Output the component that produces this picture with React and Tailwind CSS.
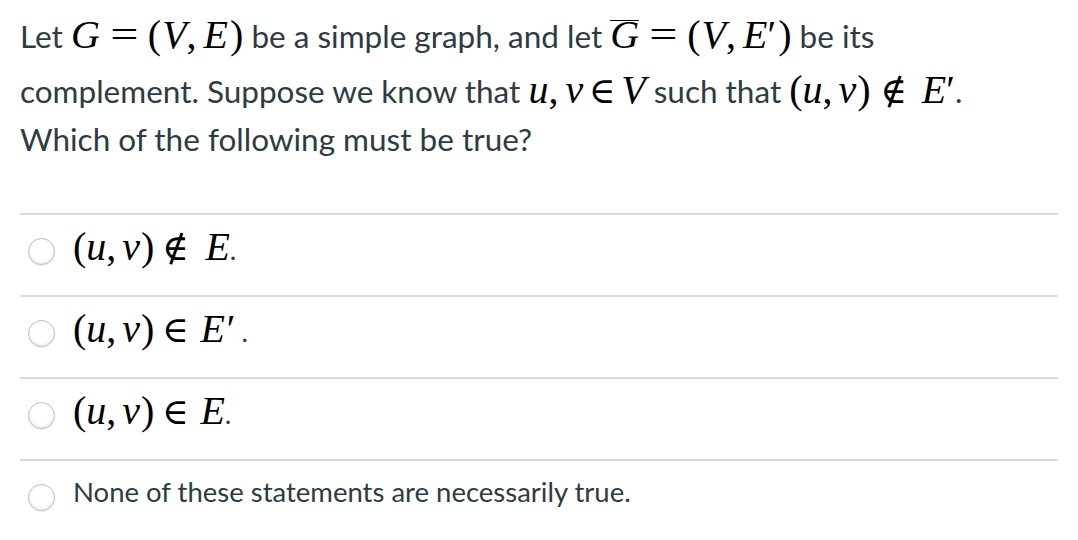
import React from "react";

const M = ({ children, className = "" }) => (
  <span className={"font-['Liberation_Serif','DejaVu_Serif',serif] text-[40px] leading-[28px] text-black " + className}>
    {children}
  </span>
);

const I = ({ children, className = "" }) => <span className={"italic " + className}>{children}</span>;

const Rel = ({ children, className = "" }) => (
  <span className={"inline-flex justify-center text-[36px] " + className}>{children}</span>
);

const Radio = () => (
  <div className="mt-[23px] ml-[8px] w-[27px] h-[27px] shrink-0 rounded-full border border-[#bdbdbd] bg-white shadow-[inset_0_-2px_3px_rgba(0,0,0,0.07),0_1px_1px_rgba(0,0,0,0.08)]" />
);

const Sep = () => <div className="h-[2px] bg-[#dcdcdc]" />;

const Row = ({ children, math }) => (
  <div className="flex h-[80px] items-start">
    <Radio />
    <div className={"ml-[18px] leading-[32px] whitespace-nowrap text-[27.5px] " + (math ? "mt-[18px]" : "mt-[15px]")}>
      {children}
    </div>
  </div>
);

const UV = () => (
  <>
    (<I>u</I>,<I className="ml-[6px]">v</I>
    <span className="ml-[1px]">)</span>
  </>
);

const Eq = () => (
  <Rel className="w-[28px] mx-[10px] text-[40px]">
    <span className="inline-block scale-x-125">=</span>
  </Rel>
);

export default function App() {
  return (
    <div className="min-h-[540px] w-[1078px] bg-white px-[20px] pt-[12px] font-['Lato','Noto_Sans',sans-serif] text-[31.5px] text-[#2d3b45]">
      <div className="whitespace-nowrap">
        <div className="leading-[48px] mb-[7px]">
          Let{" "}
          <M>
            <I>G</I>
            <Eq />
            (<I className="ml-[1px]">V</I>,<I className="ml-[7px]">E</I>
            <span className="ml-[2px]">)</span>
          </M>{" "}
          be a simple graph, and let{" "}
          <M>
            <span className="inline-block border-t-[1.5px] border-black leading-[28px]">
              <I>G</I>
            </span>
            <Eq />
            (<I className="ml-[1px]">V</I>,<I className="ml-[7px]">E</I>′<span className="ml-[2px]">)</span>
          </M>{" "}
          be its
        </div>
        <div className="leading-[48px]">
          complement. Suppose we know that{" "}
          <M>
            <I>u</I>,<I className="ml-[7px]">v</I>
            <Rel className="w-[28px] mx-[5px]">∈</Rel>
            <I>V</I>
          </M>{" "}
          such that{" "}
          <M>
            <UV />
            <Rel className="w-[28px] ml-[9px] mr-[14px]">∉</Rel>
            <I>E</I>′
          </M>
          .
        </div>
        <div className="leading-[48px]">Which of the following must be true?</div>
      </div>

      <div className="mt-[50px]">
        <Sep />
        <Row math>
          <M>
            <UV />
            <Rel className="w-[28px] ml-[7px] mr-[16px]">∉</Rel>
            <I>E</I>
          </M>
          .
        </Row>
        <Sep />
        <Row math>
          <M>
            <UV />
            <Rel className="w-[26px] ml-[8px] mr-[12px]">∈</Rel>
            <I>E</I>
            <span className="ml-[2px]">′</span>
          </M>
          <span className="ml-[6px]">.</span>
        </Row>
        <Sep />
        <Row math>
          <M>
            <UV />
            <Rel className="w-[26px] ml-[8px] mr-[12px]">∈</Rel>
            <I>E</I>
          </M>
          .
        </Row>
        <Sep />
        <Row>None of these statements are necessarily true.</Row>
      </div>
    </div>
  );
}
